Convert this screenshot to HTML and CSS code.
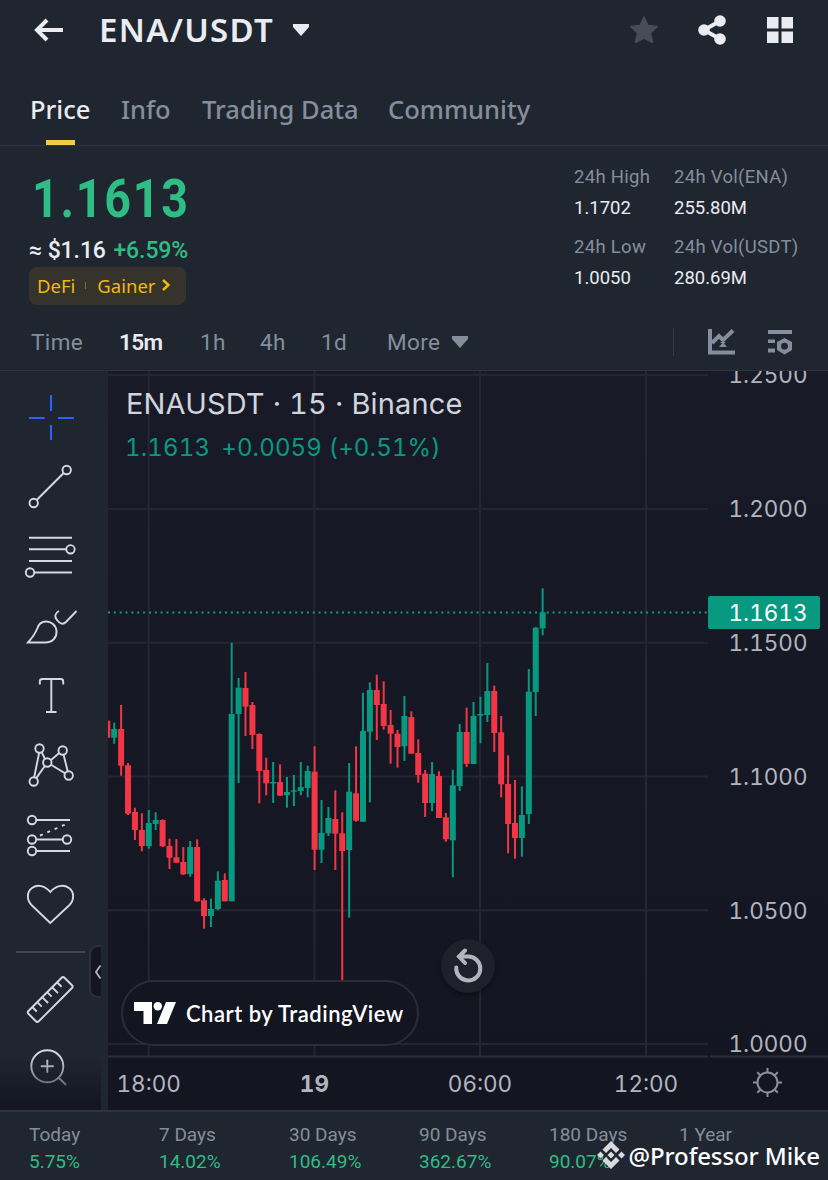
FILE: index.html
```html
<!DOCTYPE html>
<html lang="en">
<head>
    <meta charset="UTF-8">
    <meta name="viewport" content="width=device-width, initial-scale=1.0">
    <title>ENA/USDT</title>
    <link rel="stylesheet" href="styles.css">
</head>
<body>
    <header class="header">
        <svg class="back" width="30" height="24" viewBox="0 0 30 24"><path d="M30 12H4M14 2L4 12L14 22"/></svg>
        <h1>ENA/USDT</h1>
        <svg class="caret" width="16" height="12" viewBox="0 0 16 12"><path d="M0 0H16V3L8 12L0 3Z"/></svg>
        <div class="header-icons">
            <svg width="30" height="30" viewBox="0 0 30 30"><path class="star" d="M15 2L19 10.5L28 11.6L21.5 18L23.5 27.5L15 23L6.500 27.500L8.500 18L2 11.600L11 10.500Z"/></svg>
            <svg width="30" height="30" viewBox="0 0 30 30"><path class="share-line" d="M23 6L7 15L23 24"/><circle cx="23" cy="6" r="5.800"/><circle cx="7" cy="15" r="5.800"/><circle cx="23" cy="24" r="5.800"/></svg>
            <svg width="30" height="30" viewBox="0 0 30 30"><path d="M2 2H13.500V13.500H2ZM16.500 2H28V13.500H16.500ZM2 16.500H13.500V28H2ZM16.500 16.500H28V28H16.500Z"/></svg>
        </div>
    </header>

    <nav class="tabs">
        <a class="active t-price">Price</a>
        <a class="t-info">Info</a>
        <a class="t-data">Trading Data</a>
        <a class="t-comm">Community</a>
    </nav>

    <section class="summary">
        <div class="quote">
            <div class="last">1.1613</div>
            <div class="fiat">≈ $1.16 <span>+6.59%</span></div>
            <div class="tags">
                <span>DeFi</span><i></i><span>Gainer</span>
                <svg width="8" height="12" viewBox="0 0 8 12"><path d="M1 1L6.500 6L1 11"/></svg>
            </div>
        </div>
        <dl class="stats">
            <div><dt>24h High</dt><dd>1.1702</dd></div>
            <div><dt>24h Vol(ENA)</dt><dd>255.80M</dd></div>
            <div><dt>24h Low</dt><dd>1.0050</dd></div>
            <div><dt>24h Vol(USDT)</dt><dd>280.69M</dd></div>
        </dl>
    </section>

    <nav class="intervals">
        <a class="i-time">Time</a>
        <a class="active i-15m">15m</a>
        <a class="i-1h">1h</a>
        <a class="i-4h">4h</a>
        <a class="i-1d">1d</a>
        <a class="i-more">More</a>
        <svg class="more-caret" width="16" height="12" viewBox="0 0 16 12"><path d="M0 0H16V3L8 12L0 3Z"/></svg>
        <div class="interval-icons">
            <svg width="28" height="28" viewBox="0 0 28 28"><path class="line" d="M3 1V24.500H28M5 15L12 8L16 12L26 2.500"/><path d="M12 19L15 15.500L13 14H19L17 15.500L20 19Z"/></svg>
            <svg width="28" height="28" viewBox="0 0 28 28"><path d="M2 2H26V6H2ZM2 11.500H9V15H2ZM2 20.500H9V24.500H2Z"/><path fill-rule="evenodd" d="M18.500 10L26 14V22L18.500 26.500L11 22V14ZM18.500 14.800A3.400 3.400 0 1 0 18.500 21.600A3.400 3.400 0 1 0 18.500 14.800Z"/></svg>
        </div>
    </nav>

    <main class="workspace">
        <aside class="tools">
            <svg class="cross" viewBox="0 0 102 70"><path d="M51 12V28M51 42V57M29 35H44.500M58 35H74"/></svg>
            <svg viewBox="0 0 102 70"><path d="M36.700 47L63.700 20"/><circle cx="66.700" cy="17" r="4.200"/><circle cx="33.700" cy="50" r="4.200"/></svg>
            <svg viewBox="0 0 102 70"><path d="M29 14.700H72M29 26.300H66M29 38H72M34.500 49.500H72"/><circle cx="70.500" cy="26.300" r="4.200"/><circle cx="30" cy="49.500" r="4.200"/></svg>
            <svg viewBox="0 0 102 70"><path d="M28 49.500H45C53 49.500 57 44 56.500 38C56 32 51 28.500 46 28.500C41 28.500 38.500 31 37 36C35 41 32 45 28 49.500ZM59 18C55 20 54 24 57 27C60 31 63 32 66 29L76.500 18"/></svg>
            <svg viewBox="0 0 102 70"><path d="M39.800 21.500V18.500Q39.800 16 42.300 16H60.700Q63.200 16 63.200 18.500V21.500M51.300 16V49M46 49H56.500"/></svg>
            <svg viewBox="0 0 102 70"><path d="M39.100 20L34.200 44.200M41.700 19.200L45 26M51 27L59.200 20.100M63.600 21.700L67.700 38.300M51 31.800L65 40.200M44.800 33L36.300 45.100"/><circle cx="39.500" cy="15.500" r="4.200"/><circle cx="62.700" cy="17.500" r="4.200"/><circle cx="47.300" cy="29.500" r="4.200"/><circle cx="33.700" cy="48.500" r="4.200"/><circle cx="68.700" cy="42.500" r="4.200"/></svg>
            <svg viewBox="0 0 102 70"><path d="M36.500 17H70M36.500 36.500H62.500M36.500 48H70"/><path class="dots" d="M40 32.700L67.500 20.500"/><circle cx="32" cy="17" r="4.200"/><circle cx="32" cy="36.500" r="4.200"/><circle cx="67" cy="36.500" r="4.200"/><circle cx="32" cy="48" r="4.200"/></svg>
            <svg viewBox="0 0 102 70"><path d="M50.300 50L32 32.500C26.500 27 26.500 19 32 15C37.500 11 45 12.500 50.300 19C55.500 12.500 63.500 11 69 15C74.500 19 74.500 27 69 32.500Z"/></svg>
            <hr>
            <svg viewBox="0 0 102 70"><g transform="translate(50.200 34.500) rotate(-45)"><rect x="-25.500" y="-7.300" width="51" height="14.600" rx="2"/><path d="M-18 -7V-1M-11 -7V-1M-4 -7V1M3 -7V-1M10 -7V1M17 -7V-1"/></g></svg>
            <svg viewBox="0 0 102 70"><circle cx="47.300" cy="31.300" r="16"/><path d="M59 43L66 50M40.800 31.300H53.800M47.300 24.800V37.800"/></svg>
            <div class="collapse"><svg width="6" height="14" viewBox="0 0 6 14"><path d="M5.500 0.500L1 7L5.500 13.500"/></svg></div>
        </aside>

        <div class="chart">
            <svg id="candles" viewBox="108 371 720 739"></svg>
            <div class="legend">
                <div class="symbol">ENAUSDT · 15 · Binance</div>
                <div class="change"><span>1.1613</span><span>+0.0059 (+0.51%)</span></div>
            </div>
            <div class="tv-badge">
                <svg width="42" height="22" viewBox="0 0 42 22"><path d="M0 0H18V22H9.500V9H0ZM32 0H42L33 22H23Z"/><circle cx="23.800" cy="4.200" r="4.200"/></svg>
                <span>Chart by TradingView</span>
            </div>
            <div class="reset">
                <svg width="32" height="36" viewBox="0 0 32 36"><path d="M4.300 19.500A12 12 0 1 0 16 8.500H8M13 2.500L7 8.500L13 15"/></svg>
            </div>
        </div>
    </main>

    <footer class="periods">
        <div><span>Today</span><b>5.75%</b></div>
        <div><span>7 Days</span><b>14.02%</b></div>
        <div><span>30 Days</span><b>106.49%</b></div>
        <div><span>90 Days</span><b>362.67%</b></div>
        <div><span>180 Days</span><b>90.07%</b></div>
        <div><span>1 Year</span></div>
        <div class="author">
            <svg width="28" height="28" viewBox="0 0 28 28"><path d="M14 0L22.500 8.500L19 12L14 7L9 12L5.500 8.500ZM14 28L22.500 19.500L19 16L14 21L9 16L5.500 19.500ZM14 10.500L17.500 14L14 17.500L10.500 14ZM3.500 10.500L7 14L3.500 17.500L0 14ZM24.500 10.500L28 14L24.500 17.500L21 14Z"/></svg>
            <span>@Professor Mike</span>
        </div>
    </footer>

    <script>
        // direction, high, low, body top, body bottom
        const candles = [
            ['d', 720.7, 737.7, 720.7, 737.7], ['u', 722.7, 743.7, 729, 737.7], ['d', 705, 775.7, 729, 765.7],
            ['d', 763, 815, 765.3, 813.7], ['d', 807.7, 840, 812, 830], ['d', 813.3, 851.3, 830, 846],
            ['u', 810, 848.7, 823, 846], ['u', 812.3, 830, 820, 824], ['d', 819.3, 847, 820, 846.3],
            ['d', 838.7, 869, 846, 857.7], ['d', 839, 862.7, 857.3, 862.7], ['d', 847, 875, 862, 874.3],
            ['u', 841, 876.7, 847, 874], ['d', 839.3, 901.7, 847, 901.3], ['d', 898.3, 928.7, 900.3, 916],
            ['u', 898.7, 927, 909, 916], ['u', 871.3, 910.3, 880.7, 909], ['d', 873.3, 901.3, 880, 901.3],
            ['u', 642.7, 901.3, 714, 901.3], ['u', 678, 783, 687.7, 714], ['d', 672, 736, 688, 706.7],
            ['d', 702, 749, 705, 735], ['d', 733.3, 803.3, 734, 771], ['d', 757.7, 795.3, 770, 783.3],
            ['u', 762, 803, 782, 783.5], ['d', 764.3, 796, 782, 795.7], ['u', 777, 807.7, 792, 795.3],
            ['u', 775, 806, 790.3, 791.7], ['u', 762, 795.3, 787, 791], ['u', 765.7, 797.3, 771, 788],
            ['d', 746.3, 870, 771.7, 849.7], ['u', 800, 863, 833, 849.7], ['u', 807, 836, 818, 833.3],
            ['d', 790.3, 870, 819, 833.7], ['d', 812.3, 981.7, 833.3, 851], ['u', 763, 917.7, 791.7, 850],
            ['d', 746.3, 821.7, 793.3, 820.7], ['u', 692.7, 821.7, 731, 821.7], ['u', 682.3, 802.3, 690, 731.7],
            ['d', 674.7, 740, 690, 705], ['d', 681.3, 729.7, 704, 726], ['d', 710, 763.7, 725, 733.7],
            ['d', 730, 767.7, 733.7, 747], ['u', 696, 761, 716, 746.3], ['d', 711.3, 753.7, 717, 753.7],
            ['d', 739.3, 782.7, 753, 775], ['d', 770, 817, 773.7, 803], ['u', 762, 811.3, 774, 803],
            ['d', 771.3, 818, 776, 818], ['d', 813, 841.7, 817.3, 839.3], ['u', 769.7, 877.3, 785.3, 840.3],
            ['u', 724, 791, 732, 786], ['d', 707.7, 767, 732, 763.7], ['u', 702, 764, 716, 764],
            ['u', 696.7, 743.3, 714, 715.7], ['u', 663, 722, 691, 715], ['d', 685.7, 752, 691, 733],
            ['d', 716, 797.3, 732.3, 784.3], ['d', 755.3, 853.3, 784, 824], ['d', 780, 858.7, 823, 838],
            ['u', 786.3, 856.7, 815, 838], ['u', 669, 824, 691.7, 814], ['u', 627, 716, 627.7, 692],
            ['u', 588.3, 635.3, 612.3, 628.3]
        ];
        const prices = [['1.2500', 375], ['1.2000', 509], ['1.1500', 642.7], ['1.1000', 776.5], ['1.0500', 910.3], ['1.0000', 1044]];
        const times = [['18:00', 148.7], ['19', 314.4], ['06:00', 480], ['12:00', 646]];

        let out = '';
        for (const [label, y] of prices) {
            out += `<path class="grid" d="M108 ${y}H708"/><text class="axis" x="768" y="${y + 8.3}">${label}</text>`;
        }
        for (const [label, x] of times) {
            out += `<path class="grid" d="M${x} 371V1056"/><text class="axis${label === '19' ? ' day' : ''}" x="${x}" y="1092">${label}</text>`;
        }
        out += '<path class="border" d="M108 1056.500H708M710 1056.500H828"/>';
        out += '<path class="last-line" d="M108 612.500H708"/>';
        candles.forEach(([dir, high, low, top, bottom], i) => {
            const x = 107.3 + i * 6.91;
            out += `<g class="${dir}"><rect x="${x - 1}" y="${high}" width="2" height="${low - high}"/>`;
            out += `<rect x="${x - 3}" y="${top}" width="6" height="${bottom - top}"/></g>`;
        });
        out += '<rect class="last-tag" x="708" y="596" width="112" height="33" rx="2"/><text class="axis on-tag" x="768" y="621">1.1613</text>';
        // settings
        out += '<g class="gear" transform="translate(767.500 1082.500)"><circle r="10"/>';
        for (let a = 0; a < 360; a += 45) {
            out += `<path d="M0 -10V-14.500" transform="rotate(${a})"/>`;
        }
        out += '</g>';
        document.getElementById('candles').innerHTML = out;
    </script>
</body>
</html>
```
FILE: styles.css
```css
* {
    box-sizing: border-box;
}

body {
    margin: 0;
    width: 828px;
    height: 1180px;
    overflow: hidden;
    background: #202630;
    color: #eaecf2;
    font-family: Roboto, "Noto Sans", sans-serif;
}

svg {
    display: block;
    flex: none;
}

a, span, b, dt, dd {
    white-space: nowrap;
}

/* header */
.header {
    display: flex;
    align-items: center;
    height: 59px;
    padding: 0 33px;
    fill: #eaecf2;
}

.back {
    fill: none;
    stroke: #eaecf2;
    stroke-width: 4;
}

.header h1 {
    width: 174px;
    margin: 0 20px 0 36px;
    font: 600 33px "Noto Sans", sans-serif;
    letter-spacing: 1.3px;
}

.header-icons {
    display: flex;
    gap: 38px;
    margin-left: auto;
}

.star {
    fill: #474d57;
    stroke: #474d57;
    stroke-width: 1.5;
    stroke-linejoin: round;
}

.share-line {
    fill: none;
    stroke: #eaecf2;
    stroke-width: 4;
}

/* tabs */
.tabs {
    display: flex;
    gap: 30px;
    height: 87px;
    padding: 31px 30px 0;
    border-bottom: 1px solid #2d3240;
    color: #848e9c;
    font: 500 25.500px/38px "Noto Sans", sans-serif;
}

.tabs .active {
    color: #eaecf2;
    position: relative;
}

.tabs .active::after {
    content: "";
    position: absolute;
    left: 16px;
    bottom: 0;
    width: 29px;
    height: 5px;
    background: #f0cb46;
}

.t-price {
    width: 61px;
}

.t-info {
    width: 51px;
}

.t-data {
    width: 156px;
}

/* price summary */
.summary {
    display: flex;
    justify-content: space-between;
    height: 169px;
    padding: 17px 28px 0 29px;
}

.last {
    margin-left: 3px;
    color: #2ebd85;
    font-size: 53px;
    font-weight: 700;
    line-height: 73px;
    letter-spacing: 2px;
    transform: scaleX(.88);
    transform-origin: left;
}

.fiat {
    font-size: 23px;
    font-weight: 500;
    line-height: 29px;
    letter-spacing: -.1px;
}

.fiat span {
    color: #2ebd85;
    margin-left: 2px;
}

.tags {
    display: flex;
    align-items: center;
    width: 157px;
    height: 38px;
    margin-top: 2px;
    padding: 0 8px 2px;
    border-radius: 8px;
    background: #35332b;
    color: #f0b90b;
    font: 18.500px "Noto Sans", sans-serif;
}

.tags i {
    width: 1px;
    height: 7px;
    margin: 0 11px 0 10px;
    background: #8b6c18;
}

.tags svg {
    margin-left: 7px;
    fill: none;
    stroke: #f0b90b;
    stroke-width: 2.5;
}

.stats {
    display: grid;
    grid-template-columns: 100px 126px;
    grid-auto-rows: 70px;
    margin: -1px 0 0;
    line-height: 30px;
}

.stats dt {
    color: #848e9c;
    font-size: 18.5px;
    letter-spacing: .3px;
}

.stats dd {
    margin: 0;
    padding-top: 1px;
    font-size: 18.5px;
}

/* intervals */
.intervals {
    display: flex;
    align-items: center;
    height: 56px;
    padding: 0 34px 2px 31px;
    border-bottom: 1px solid #2d3240;
    color: #848e9c;
    font-size: 22.500px;
    letter-spacing: .4px;
}

.intervals .active {
    color: #eaecf2;
    font-weight: 600;
    letter-spacing: -.6px;
}

.i-time {
    width: 88px;
}

.i-15m {
    width: 81px;
}

.i-1h {
    width: 60px;
}

.i-4h {
    width: 61px;
}

.i-1d {
    width: 66px;
}

.i-more {
    width: 65px;
}

.intervals svg {
    fill: #848e9c;
}

.interval-icons {
    display: flex;
    gap: 31px;
    margin-left: auto;
    padding-left: 33px;
    border-left: 1px solid #343946;
}

.interval-icons .line {
    fill: none;
    stroke: #848e9c;
    stroke-width: 4;
}

/* drawing tools */
.workspace {
    display: flex;
    height: 739px;
}

.tools {
    position: relative;
    width: 108px;
    padding-top: 12px;
    border-right: 7px solid #202630;
}

.tools > svg {
    width: 102px;
    height: 70px;
    fill: none;
    stroke: #d5d8e2;
    stroke-width: 1.9;
}

.tools > .cross {
    stroke: #2962ff;
    stroke-width: 2;
}

.dots {
    stroke-dasharray: 3 5;
}

.tools hr {
    width: 69px;
    height: 2px;
    margin: 8px 0 12px 16px;
    border: 0;
    background: #434651;
}

.tools::after {
    content: "";
    position: absolute;
    left: 0;
    right: 0;
    bottom: 0;
    height: 56px;
    background: linear-gradient(transparent, #131521);
}

.collapse {
    position: absolute;
    top: 574px;
    right: 0;
    width: 12px;
    height: 53px;
    padding: 18px 0 0 4px;
    border: 2px solid #2b2f3b;
    border-right: 0;
    border-radius: 9px 0 0 9px;
    background: #131521;
}

.collapse svg {
    fill: none;
    stroke: #b2b5be;
    stroke-width: 1.8;
}

/* chart */
.chart {
    position: relative;
    width: 720px;
    background: linear-gradient(#181b27, #131521);
}

#candles {
    width: 720px;
    height: 739px;
}

.grid, .border {
    stroke: #242732;
    stroke-width: 2;
}

.border {
    stroke: #2c2f3a;
}

.axis {
    fill: #b2b5be;
    font-family: Inter, sans-serif;
    font-size: 22.500px;
    font-variant-numeric: tabular-nums;
    text-anchor: middle;
}

.axis.day {
    font-weight: 700;
}

.axis.on-tag {
    fill: #fff;
}

.last-line {
    stroke: #0f9d82;
    stroke-width: 2;
    stroke-dasharray: 2 3.85;
}

.last-tag, .u {
    fill: #089981;
}

.d {
    fill: #f23645;
}

.gear {
    fill: none;
    stroke: #8c8f99;
    stroke-width: 2;
}

.legend {
    position: absolute;
    left: 18px;
    top: 14px;
    font-family: Inter, sans-serif;
    font-variant-numeric: tabular-nums;
}

.symbol {
    color: #d1d4dc;
    font-size: 29px;
    line-height: 38px;
    letter-spacing: .15px;
}

.change {
    display: flex;
    gap: 11px;
    margin: 7px 0 0 -1px;
    color: #089981;
    font-size: 24px;
    line-height: 35px;
    letter-spacing: .15px;
}

.tv-badge {
    position: absolute;
    left: 13px;
    top: 609px;
    display: flex;
    align-items: center;
    gap: 10px;
    width: 298px;
    height: 66px;
    padding: 0 0 0 11px;
    border: 2px solid #2a2d38;
    border-radius: 33px;
    background: #131521;
    color: #fff;
    fill: #fff;
    font: 600 22px Lato, sans-serif;
    letter-spacing: .5px;
}

.reset {
    position: absolute;
    left: 333px;
    top: 568px;
    width: 54px;
    height: 54px;
    padding: 9px 11px;
    border-radius: 50%;
    background: #1e202b;
    box-shadow: 0 2px 4px rgba(0, 0, 0, 0.4);
}

.reset svg {
    fill: none;
    stroke: #b2b5be;
    stroke-width: 4;
    stroke-linecap: round;
}

/* performance */
.periods {
    position: relative;
    display: grid;
    grid-template-columns: repeat(6, 130px);
    height: 70px;
    padding: 9px 0 0 29px;
    border-top: 2px solid #2e343e;
    font-size: 19px;
    line-height: 27px;
}

.periods span, .periods b {
    display: block;
    color: #848e9c;
    font-weight: 400;
}

.periods b {
    color: #2ebd85;
}

.author {
    position: absolute;
    right: 8px;
    top: 25px;
    display: flex;
    align-items: center;
    gap: 4px;
    height: 36px;
    fill: #d9dadd;
}

.periods .author span {
    color: #fff;
    font: 500 24px "Noto Sans", sans-serif;
    letter-spacing: -.1px;
}
```
